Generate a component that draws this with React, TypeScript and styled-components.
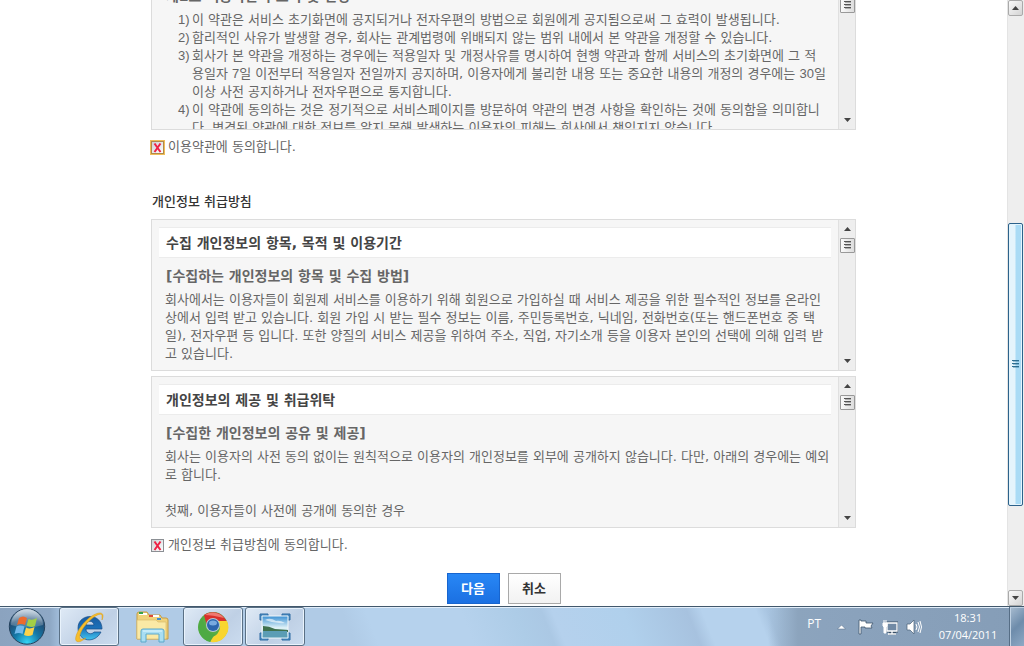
import React from "react";
import styled, { createGlobalStyle, css } from "styled-components";

const GlobalStyle = createGlobalStyle`
  * { box-sizing: border-box; }
  body {
    margin: 0;
    background: #fff;
    color: #666;
    font: 13px/18px "DejaVu Sans", "Noto Sans CJK KR", sans-serif;
  }
  p, h2, h3, h4, ol { margin: 0; padding: 0; }
`;

const Desktop = styled.div`
  display: flex;
  flex-direction: column;
  height: 100vh;
  overflow: hidden;
`;

const Browser = styled.div`
  display: flex;
  flex: 1;
  min-height: 0;
`;

const Viewport = styled.main`
  flex: 1;
  min-width: 0;
  overflow: hidden;
`;

const Form = styled.form`
  width: 100%;
  max-width: 705px;
  margin: 0 auto;
`;

const Panel = styled.section<{ $cut?: boolean }>`
  display: flex;
  height: 152px;
  margin-bottom: 5px;
  overflow: hidden;
  border: 1px solid #dcdcdc;
  background: #f6f6f6;
  ${(p) => p.$cut && css`height: 130px; border-top: 0;`}
`;

const PanelBody = styled.div<{ $scrolled?: boolean }>`
  flex: 1;
  min-width: 0;
  padding: 7px;
  white-space: nowrap;
  ${(p) => p.$scrolled && css`padding-top: 0; margin-top: -13px;`}
`;

const PanelTitle = styled.h3`
  height: 31px;
  padding: 0 7px;
  border: 1px solid #ececec;
  border-width: 1px 0;
  background: #fff;
  color: #444;
  font-size: 14px;
  line-height: 31px;
`;

const Clause = styled.h4`
  padding: 0 7px;
  color: #666;
  font-size: 14px;
  line-height: 18px;
`;

const ClauseBlock = styled.div`
  padding-top: 9px;
`;

const Text = styled.p`
  padding: 6px 6px 0;
`;

const Rules = styled.ol`
  padding: 6px 0 0 19px;
  list-style: none;
`;

const Rule = styled.li`
  display: grid;
  grid-template-columns: 14px 1fr;
`;

const Digits = styled.span`
  font-family: "Liberation Sans", sans-serif;
`;

const Track = styled.div`
  display: flex;
  flex-direction: column;
  align-items: center;
  width: 17px;
  border-left: 1px solid #e0e0e0;
  background: #eee;
`;

const ArrowBox = styled.span`
  display: flex;
  align-items: center;
  justify-content: center;
  height: 18px;
`;

const Grip = styled.span<{ $cut?: boolean }>`
  display: flex;
  align-items: center;
  justify-content: center;
  width: 15px;
  height: 15px;
  margin-bottom: auto;
  border: 1px solid #999;
  border-radius: 1px;
  background: linear-gradient(90deg, #fafafa, #ddd);
  ${(p) => p.$cut && css`margin-top: -2px;`}
`;

const Agree = styled.label<{ $spaced?: boolean }>`
  display: flex;
  align-items: center;
  gap: 4px;
  height: 24px;
  ${(p) => p.$spaced && css`margin-bottom: 33px;`}
`;

const CheckCell = styled.span`
  display: grid;
  width: 13px;
  height: 13px;
  & > * { grid-area: 1 / 1; }
`;

const Check = styled.input<{ $hot?: boolean }>`
  appearance: none;
  width: 13px;
  height: 13px;
  margin: 0;
  border: 1px solid #8b8f94;
  background: linear-gradient(135deg, #ccd0d5, #fff);
  ${(p) => p.$hot && css`outline: 1px solid #f0bd58; border-color: #b08a4c;`}
`;

const Mark = styled.svg`
  width: 13px;
  height: 13px;
  pointer-events: none;
`;

const SectionTitle = styled.h2`
  height: 27px;
  padding-left: 1px;
  color: #333;
  font-size: 13px;
  font-weight: 500;
  line-height: 20px;
`;

const Actions = styled.div`
  display: flex;
  justify-content: center;
  gap: 8px;
  padding-top: 16px;
`;

const Button = styled.button<{ $primary?: boolean }>`
  width: 53px;
  height: 31px;
  padding: 0;
  border: 1px solid #a9a9a9;
  background: linear-gradient(#fff, #f2f2f2);
  color: #333;
  font: bold 13px/18px "DejaVu Sans", "Noto Sans CJK KR", sans-serif;
  ${(p) => p.$primary && css`
    border-color: #1765cf;
    background: linear-gradient(#2887f5, #1b70e2);
    color: #fff;
  `}
`;

const PageTrack = styled.div`
  display: flex;
  flex-direction: column;
  width: 17px;
  padding-right: 1px;
  border-left: 1px solid #e4e4e4;
  background: #eee;
`;

const PageArrow = styled.button`
  display: flex;
  align-items: center;
  justify-content: center;
  width: 15px;
  height: 16px;
  padding: 0;
  border: 1px solid #aaa;
  border-radius: 2px;
  background: linear-gradient(135deg, #fafafa, #d4d4d4);
`;

const Gap = styled.span<{ $grow: number }>`
  flex: ${(p) => p.$grow} 0 0;
`;

const PageThumb = styled.span`
  display: flex;
  flex: 282 0 0;
  align-items: center;
  justify-content: center;
  width: 15px;
  border: 1px solid #2c628b;
  border-radius: 2px;
  background: linear-gradient(90deg, #e4f4fc 0 6px, #a9dbf5 7px 12px, #c8ddea);
  box-shadow: inset 0 0 0 1px #e4f5fd;
`;

const Taskbar = styled.footer`
  display: flex;
  height: 40px;
  flex: none;
  border-top: 1px solid #42586c;
  background:
    linear-gradient(#e2eefa, #e2eefa) 0 0 / 100% 1px no-repeat,
    linear-gradient(90deg, #8ba3bf 0, #8ea8c5 50px, #aecbe9 66px, transparent 120px),
    linear-gradient(270deg, #859db7 0, #8ba3bd 200px, #8ca4bd 226px, transparent 256px),
    linear-gradient(68deg, #b0cbe6 0 330px, #b6d2ed 352px 440px, #adcce7 490px, #abc8e4 515px, #b5d1ed 525px, #b0d0ec 590px, #a7c2df 650px, #b6d2ed 664px 714px, #a8c4e0 725px, #b0cce8);
`;

const StartButton = styled.button`
  width: 59px;
  padding: 0 0 0 8px;
  border: 0;
  background: none;
  text-align: left;
  svg { display: block; }
`;

const Task = styled.button<{ $open?: boolean; $wide?: boolean }>`
  display: flex;
  align-items: center;
  justify-content: center;
  width: ${(p) => (p.$wide ? "62px" : "60px")};
  padding: 0;
  border: 0;
  background: none;
  ${(p) => p.$open && css`
    margin-right: 2px;
    border: 1px solid #5a7085;
    border-radius: 3px;
    background: linear-gradient(135deg, #dfeaf6, #bfd0e5 60%, #cbdcef);
    box-shadow: inset 0 0 0 1px #e9f3fc;
  `}
`;

const Tray = styled.div`
  display: flex;
  align-items: center;
  margin-left: auto;
  color: #fff;
  font: 11px/17px "Open Sans", sans-serif;
`;

const Language = styled.span`
  margin-right: 16px;
  padding-bottom: 6px;
  font-size: 12px;
`;

const TrayIcons = styled.span`
  display: flex;
  align-items: center;
  gap: 8px;
  & > :first-child { margin-right: 4px; }
`;

const Clock = styled.time`
  width: 82px;
  margin-left: 5px;
  padding-bottom: 1px;
  text-align: center;
`;

const ShowDesktop = styled.button`
  align-self: stretch;
  width: 15px;
  padding: 0;
  border: 1px solid #566d85;
  border-width: 0 0 0 1px;
  background: linear-gradient(135deg, #a9bdd1, #6e8cab 50%, #8ea9c5);
  box-shadow: inset 1px 1px 0 #c1d2e3;
`;

const Arrow = ({ down }: { down?: boolean }) => (
  <svg width="7" height="4" viewBox="0 0 7 4">
    <path d={down ? "M0 0H7L3.500 4Z" : "M0 4H7L3.500 0Z"} fill="#444" />
  </svg>
);

const Lines = ({ color = "#555" }: { color?: string }) => (
  <svg width="7" height="9" viewBox="0 0 7 9">
    <path d="M0 .5H7M0 3.500H7M0 6.500H7" stroke={color} />
    <path d="M1 1.500H7M1 4.500H7M1 7.500H7" stroke={color} opacity=".4" />
  </svg>
);

const Scroll = ({ cut }: { cut?: boolean }) => (
  <Track>
    {!cut && <ArrowBox><Arrow /></ArrowBox>}
    <Grip $cut={cut}><Lines /></Grip>
    <ArrowBox><Arrow down /></ArrowBox>
  </Track>
);

const AgreeBox = ({ hot, children }: { hot?: boolean; children: React.ReactNode }) => (
  <Agree $spaced={hot}>
    <CheckCell>
      <Check type="checkbox" defaultChecked $hot={hot} />
      <Mark viewBox="0 0 13 13">
        <path d="M3.500 2.500L9.500 11M9.500 2.500L3.500 11" stroke="#ee2245" strokeWidth="2" />
      </Mark>
    </CheckCell>
    {children}
  </Agree>
);

const StartIcon = () => (
  <svg width="38" height="39" viewBox="0 0 38 39">
    <defs>
      <radialGradient id="orb" cx=".5" cy=".95" r=".9">
        <stop offset="0" stopColor="#35d5f5" />
        <stop offset=".4" stopColor="#1479a8" />
        <stop offset=".75" stopColor="#204e76" />
        <stop offset="1" stopColor="#7294b2" />
      </radialGradient>
      <linearGradient id="shine" x2="0" y2="1">
        <stop stopColor="#fff" stopOpacity=".65" />
        <stop offset="1" stopColor="#fff" stopOpacity=".15" />
      </linearGradient>
    </defs>
    <circle cx="19" cy="19.500" r="17.700" fill="url(#orb)" stroke="#24415c" />
    <path d="M3 18A16 16 0 0 1 35 18Q19 23 3 18Z" fill="url(#shine)" />
    <path d="M11 11Q15 8 19 11L17 18Q13 16 9 18Z" fill="#ec6b2d" />
    <path d="M20.500 12Q24 14 29 11L27 19Q23 21 18.500 18.500Z" fill="#a3cf45" />
    <path d="M8.500 19.500Q12 17.500 16.500 19.500L14.500 27Q11 25 6.500 27Z" fill="#72b9ec" />
    <path d="M18 20.500Q22 22.500 26.500 20L24.500 28Q20 30 16 28Z" fill="#fbd24a" />
  </svg>
);

const ExplorerIcon = () => (
  <svg width="32" height="34" viewBox="0 0 32 34">
    <defs>
      <linearGradient id="ie" x2="0" y2="1">
        <stop stopColor="#1a5da3" />
        <stop offset=".5" stopColor="#1b70b9" />
        <stop offset="1" stopColor="#43c4ee" />
      </linearGradient>
    </defs>
    <path d="M29 19H13C13 24 19 25 21 22H28C22 34 5 32 5 18C5 3 29 2 29 19ZM13 15H21C20 10 14 10 13 15Z" fill="url(#ie)" stroke="#174c86" strokeWidth=".7" />
    <path d="M29 10C33 1 25 1 16 8C5 17 0 30 4 31.500C7 32.500 10 30 13 28C7 31 5 29 8 22C12 13 26 1 29 5Z" fill="#f6bd2d" stroke="#d99a19" strokeWidth=".5" />
  </svg>
);

const FolderIcon = () => (
  <svg width="34" height="32" viewBox="0 0 34 32">
    <path d="M2 3Q2 1 4 1H12L14 4H25L27 7H31Q33 7 33 9V28H2Z" fill="#efd27b" stroke="#c59c45" />
    <path d="M4 3H12M15 5H24" stroke="#fff" strokeWidth="2" />
    <path d="M4 2H8" stroke="#36a348" strokeWidth="2" />
    <path d="M14 5H18" stroke="#dc4938" strokeWidth="2" />
    <path d="M22 8H26" stroke="#408dd1" strokeWidth="2" />
    <path d="M2 9H21L23 11H31V28H2Z" fill="#fae9a5" stroke="#dabd6d" strokeWidth=".7" />
    <path d="M6 31V20Q6 18 8 18H27Q29 18 29 20V31H24V23H11V31Z" fill="#a9def2" stroke="#5ba8cb" />
    <path d="M8 20H27" stroke="#e1f7ff" />
  </svg>
);

const ChromeIcon = () => (
  <svg width="32" height="32" viewBox="0 0 32 32">
    <circle cx="16" cy="16" r="15" fill="#57ad45" />
    <path d="M7 4A15 15 0 0 1 29 9L30 11H16Q12 11 10 15Z" fill="#d9302c" />
    <path d="M30 10A15 15 0 0 1 14 31L11 26Q19 27 22 20Q25 14 20 10Z" fill="#f8d52f" />
    <path d="M5 7L9 17Q12 23 18 23L13 31A15 15 0 0 1 5 7Z" fill="#4eaa43" />
    <path d="M8 4A14 14 0 0 1 27 7Q15 4 8 4Z" fill="#ef7970" />
    <circle cx="16" cy="14" r="7" fill="#b8c8d6" />
    <circle cx="16" cy="14" r="6" fill="#2c66ae" />
    <ellipse cx="16" cy="12" rx="4" ry="2.500" fill="#78aae0" />
  </svg>
);

const PictureIcon = () => (
  <svg width="32" height="28" viewBox="0 0 32 28">
    <defs>
      <linearGradient id="sky" x2="0" y2="1">
        <stop stopColor="#3a90d3" />
        <stop offset=".55" stopColor="#e3f4f8" />
        <stop offset="1" stopColor="#4293ab" />
      </linearGradient>
    </defs>
    <path d="M1 1H9V7H1ZM23 1H31V7H23ZM1 20H9V27H1ZM23 20H31V27H23Z" fill="#4d8fc4" stroke="#2d6ba2" />
    <path d="M3 3H29V25H3Z" fill="url(#sky)" stroke="#f2f7fa" />
    <path d="M4 13Q10 13 16 16L29 17V19H4Z" fill="#3f714f" />
    <path d="M4 18H28V24H4Z" fill="#5b9db5" />
    <path d="M6 7Q11 4 17 8Q21 7 26 10Q16 11 6 7Z" fill="#fff" opacity=".6" />
  </svg>
);

const UpIcon = () => (
  <svg width="9" height="6" viewBox="0 0 9 6">
    <path d="M.500 5H8.500L4.500 1Z" fill="#fff" stroke="#526b84" strokeWidth=".5" />
  </svg>
);

const FlagIcon = () => (
  <svg width="16" height="16" viewBox="0 0 16 16">
    <path d="M1 1H3V2H8V4H15L13 7L14 9H7V8H3V15H1Z" fill="#fff" stroke="#40566d" strokeWidth=".8" />
  </svg>
);

const NetworkIcon = () => (
  <svg width="16" height="16" viewBox="0 0 16 16">
    <path d="M5 4H15V12H5ZM7 15H14M10 12V15" fill="#7e96ad" stroke="#3a5067" strokeWidth="2.800" />
    <path d="M5 4H15V12H5ZM6 15H14M10 12V15" fill="#718aa5" stroke="#fff" strokeWidth="1.300" />
    <path d="M1 4H5V7L4 8V14H2V8L1 7ZM2 1V4M4 1V4" fill="#fff" stroke="#fff" />
  </svg>
);

const SpeakerIcon = () => (
  <svg width="16" height="16" viewBox="0 0 16 16">
    <path d="M1 5H4L8 1V15L4 11H1Z" fill="#fff" stroke="#485f76" strokeWidth=".7" />
    <path d="M10 5Q12 8 10 11M12 3Q15 8 12 13M14 2Q17 8 14 14" fill="none" stroke="#fff" strokeWidth="1" />
  </svg>
);

export default function App() {
  return (
    <Desktop>
      <GlobalStyle />
      <Browser>
        <Viewport>
          <Form onSubmit={(e) => e.preventDefault()}>
            <Panel $cut>
              <PanelBody $scrolled>
                <Clause>제2조 이용약관의 효력 및 변경</Clause>
                <Rules>
                  <Rule><Digits>1)</Digits><span>이 약관은 서비스 초기화면에 공지되거나 전자우편의 방법으로 회원에게 공지됨으로써 그 효력이 발생됩니다.</span></Rule>
                  <Rule><Digits>2)</Digits><span>합리적인 사유가 발생할 경우, 회사는 관계법령에 위배되지 않는 범위 내에서 본 약관을 개정할 수 있습니다.</span></Rule>
                  <Rule><Digits>3)</Digits><span>회사가 본 약관을 개정하는 경우에는 적용일자 및 개정사유를 명시하여 현행 약관과 함께 서비스의 초기화면에 그 적<br />용일자 <Digits>7</Digits>일 이전부터 적용일자 전일까지 공지하며, 이용자에게 불리한 내용 또는 중요한 내용의 개정의 경우에는 <Digits>30</Digits>일<br />이상 사전 공지하거나 전자우편으로 통지합니다.</span></Rule>
                  <Rule><Digits>4)</Digits><span>이 약관에 동의하는 것은 정기적으로 서비스페이지를 방문하여 약관의 변경 사항을 확인하는 것에 동의함을 의미합니<br />다. 변경된 약관에 대한 정보를 알지 못해 발생하는 이용자의 피해는 회사에서 책임지지 않습니다.</span></Rule>
                </Rules>
              </PanelBody>
              <Scroll cut />
            </Panel>
            <AgreeBox hot>이용약관에 동의합니다.</AgreeBox>

            <SectionTitle>개인정보 취급방침</SectionTitle>
            <Panel>
              <PanelBody>
                <PanelTitle>수집 개인정보의 항목, 목적 및 이용기간</PanelTitle>
                <ClauseBlock>
                  <Clause>[수집하는 개인정보의 항목 및 수집 방법]</Clause>
                  <Text>
                    회사에서는 이용자들이 회원제 서비스를 이용하기 위해 회원으로 가입하실 때 서비스 제공을 위한 필수적인 정보를 온라인<br />
                    상에서 입력 받고 있습니다. 회원 가입 시 받는 필수 정보는 이름, 주민등록번호, 닉네임, 전화번호(또는 핸드폰번호 중 택<br />
                    일), 전자우편 등 입니다. 또한 양질의 서비스 제공을 위하여 주소, 직업, 자기소개 등을 이용자 본인의 선택에 의해 입력 받<br />
                    고 있습니다.
                  </Text>
                </ClauseBlock>
              </PanelBody>
              <Scroll />
            </Panel>
            <Panel>
              <PanelBody>
                <PanelTitle>개인정보의 제공 및 취급위탁</PanelTitle>
                <ClauseBlock>
                  <Clause>[수집한 개인정보의 공유 및 제공]</Clause>
                  <Text>
                    회사는 이용자의 사전 동의 없이는 원칙적으로 이용자의 개인정보를 외부에 공개하지 않습니다. 다만, 아래의 경우에는 예외<br />
                    로 합니다.<br />
                    <br />
                    첫째, 이용자들이 사전에 공개에 동의한 경우
                  </Text>
                </ClauseBlock>
              </PanelBody>
              <Scroll />
            </Panel>
            <AgreeBox>개인정보 취급방침에 동의합니다.</AgreeBox>

            <Actions>
              <Button type="submit" $primary>다음</Button>
              <Button type="button">취소</Button>
            </Actions>
          </Form>
        </Viewport>
        <PageTrack>
          <PageArrow type="button" aria-label="위로"><Arrow /></PageArrow>
          <Gap $grow={208} />
          <PageThumb><Lines color="#2c6f93" /></PageThumb>
          <Gap $grow={84} />
          <PageArrow type="button" aria-label="아래로"><Arrow down /></PageArrow>
        </PageTrack>
      </Browser>

      <Taskbar>
        <StartButton aria-label="Start"><StartIcon /></StartButton>
        <Task $open aria-label="Internet Explorer"><ExplorerIcon /></Task>
        <Task $wide aria-label="Explorer"><FolderIcon /></Task>
        <Task $open aria-label="Chrome"><ChromeIcon /></Task>
        <Task $open aria-label="Pictures"><PictureIcon /></Task>
        <Tray>
          <Language>PT</Language>
          <TrayIcons>
            <UpIcon />
            <FlagIcon />
            <NetworkIcon />
            <SpeakerIcon />
          </TrayIcons>
          <Clock>18:31<br />07/04/2011</Clock>
          <ShowDesktop aria-label="Show desktop" />
        </Tray>
      </Taskbar>
    </Desktop>
  );
}
